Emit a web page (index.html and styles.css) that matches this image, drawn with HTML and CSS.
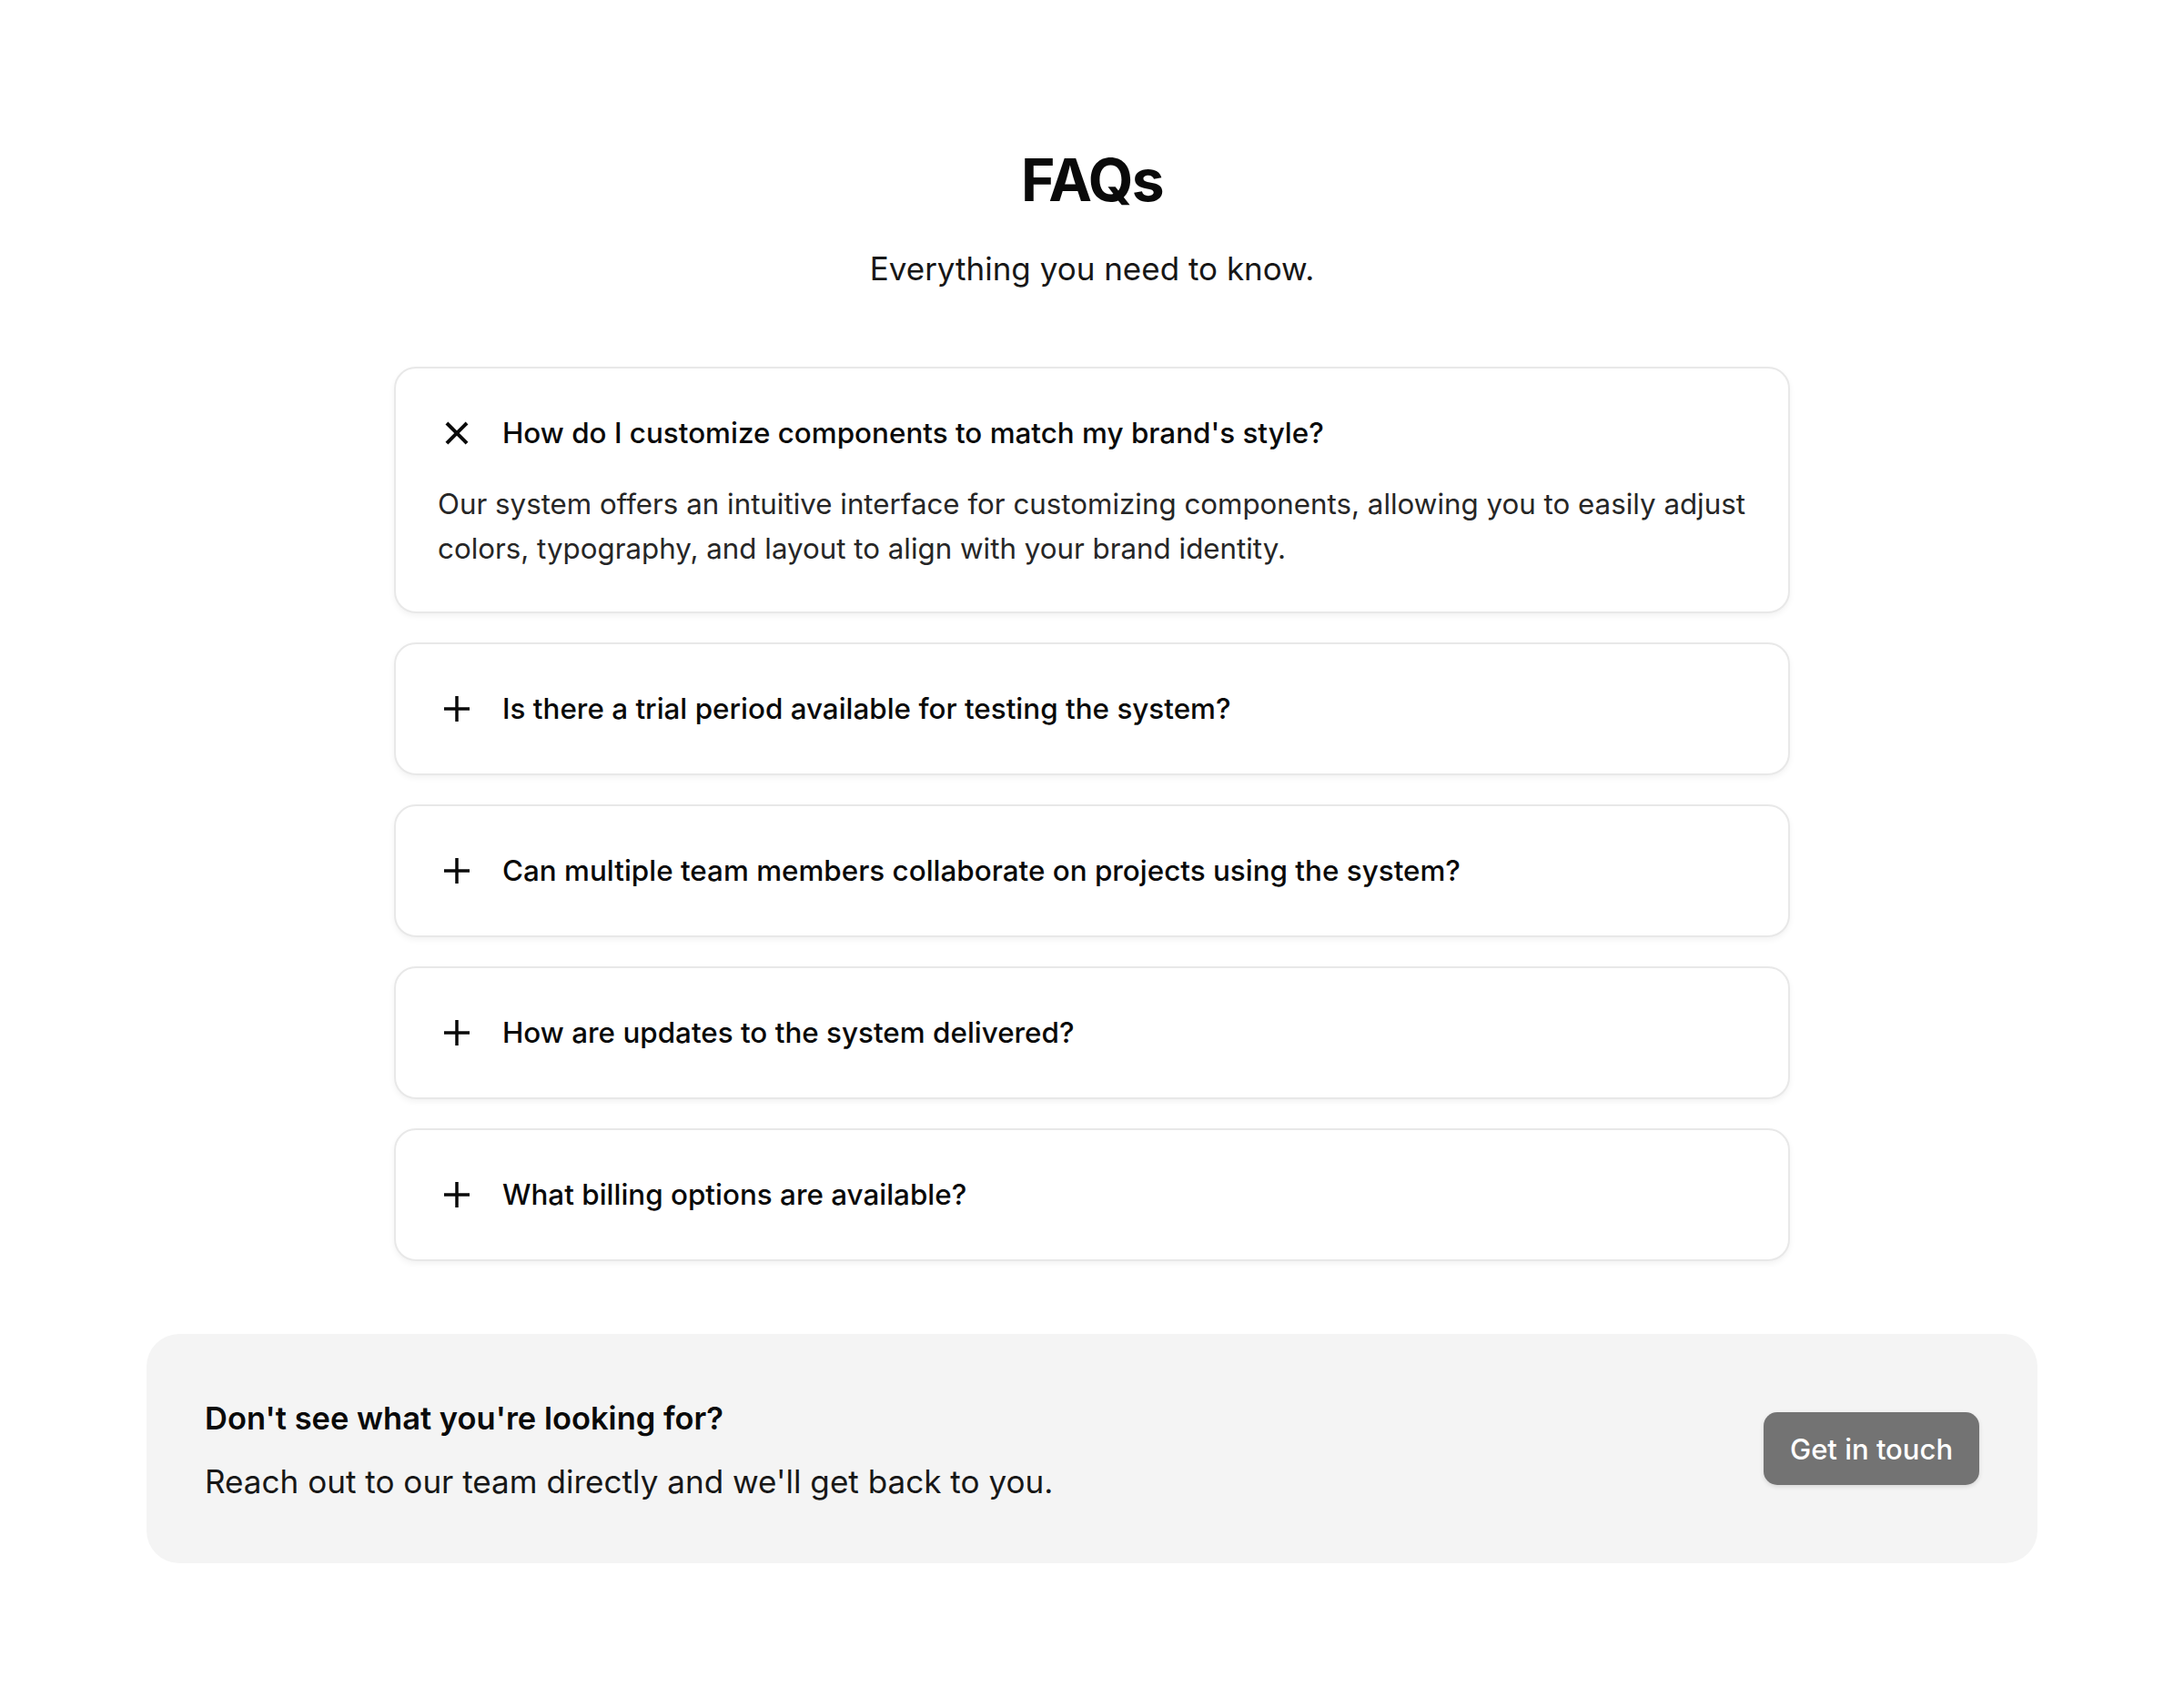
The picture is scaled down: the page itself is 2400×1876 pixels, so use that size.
FILE: index.html
```html
<!DOCTYPE html>
<html lang="en">
<head>
<meta charset="utf-8">
<title>FAQs</title>
<link rel="stylesheet" href="styles.css">
</head>
<body>
<main class="page">
  <header class="intro">
    <h1 class="title">FAQs</h1>
    <p class="subtitle">Everything you need to know.</p>
  </header>

  <section class="faq-list">
    <div class="faq open">
      <div class="faq-q">
        <svg class="icon icon-x" viewBox="0 0 24 24" fill="none" stroke="currentColor" stroke-width="2.3" stroke-linecap="square"><path d="M17.5 6.5 6.5 17.5"/><path d="m6.5 6.5 11 11"/></svg>
        <span>How do I customize components to match my brand's style?</span>
      </div>
      <p class="faq-a">Our system offers an intuitive interface for customizing components, allowing you to easily adjust colors, typography, and layout to align with your brand identity.</p>
    </div>
    <div class="faq">
      <div class="faq-q">
        <svg class="icon" viewBox="0 0 24 24" fill="none" stroke="currentColor" stroke-width="2" stroke-linecap="square"><path d="M5 12h14"/><path d="M12 5v14"/></svg>
        <span>Is there a trial period available for testing the system?</span>
      </div>
    </div>
    <div class="faq">
      <div class="faq-q">
        <svg class="icon" viewBox="0 0 24 24" fill="none" stroke="currentColor" stroke-width="2" stroke-linecap="square"><path d="M5 12h14"/><path d="M12 5v14"/></svg>
        <span>Can multiple team members collaborate on projects using the system?</span>
      </div>
    </div>
    <div class="faq">
      <div class="faq-q">
        <svg class="icon" viewBox="0 0 24 24" fill="none" stroke="currentColor" stroke-width="2" stroke-linecap="square"><path d="M5 12h14"/><path d="M12 5v14"/></svg>
        <span>How are updates to the system delivered?</span>
      </div>
    </div>
    <div class="faq">
      <div class="faq-q">
        <svg class="icon" viewBox="0 0 24 24" fill="none" stroke="currentColor" stroke-width="2" stroke-linecap="square"><path d="M5 12h14"/><path d="M12 5v14"/></svg>
        <span>What billing options are available?</span>
      </div>
    </div>
  </section>

  <section class="contact">
    <div class="contact-text">
      <h2 class="contact-title">Don't see what you're looking for?</h2>
      <p class="contact-body">Reach out to our team directly and we'll get back to you.</p>
    </div>
    <button class="contact-btn" type="button">Get in touch</button>
  </section>
</main>
</body>
</html>
```

FILE: styles.css
```css
* { box-sizing: border-box; }

html, body {
  margin: 0;
  padding: 0;
  background: #ffffff;
}

body {
  font-family: "Inter", "Noto Sans", "Liberation Sans", sans-serif;
  color: #0a0a0a;
}

.page {
  display: flex;
  flex-direction: column;
  align-items: center;
  padding-top: 162px;
}

.intro {
  display: flex;
  flex-direction: column;
  align-items: center;
}

.title {
  margin: 0;
  font-size: 64px;
  line-height: 72px;
  font-weight: 700;
  letter-spacing: -0.025em;
  color: #0a0a0a;
}

.subtitle {
  margin: 36px 0 0;
  font-size: 35px;
  line-height: 50px;
  font-weight: 400;
  color: #171717;
}

.faq-list {
  margin-top: 83px;
  width: 1534px;
  display: flex;
  flex-direction: column;
  gap: 32px;
}

.faq {
  background: #ffffff;
  border: 2px solid #e8e8e8;
  border-radius: 24px;
  box-shadow: 0 3px 6px rgba(0, 0, 0, 0.05);
  padding: 47px 46px;
}

.faq.open {
  padding-bottom: 44px;
}

.faq-q {
  display: flex;
  align-items: center;
  gap: 29px;
  height: 48px;
  font-size: 31.4px;
  font-weight: 500;
  color: #0a0a0a;
}

.icon {
  width: 42px;
  height: 42px;
  flex: none;
  color: #0a0a0a;
}

.faq-a {
  margin: 30px 0 0;
  font-size: 31.3px;
  line-height: 49px;
  font-weight: 400;
  color: #262626;
}

.contact {
  margin-top: 80px;
  width: 2078px;
  background: #f4f4f4;
  border-radius: 36px;
  padding: 64px;
  display: flex;
  align-items: center;
  justify-content: space-between;
}

.contact-title {
  margin: 0;
  font-size: 34.5px;
  line-height: 58px;
  font-weight: 600;
  color: #0a0a0a;
}

.contact-body {
  margin: 14px 0 0;
  font-size: 35.1px;
  line-height: 52px;
  font-weight: 400;
  color: #171717;
}

.contact-btn {
  width: 237px;
  height: 80px;
  border: none;
  border-radius: 15px;
  background: #737373;
  color: #ffffff;
  font-family: inherit;
  font-size: 31px;
  font-weight: 500;
  box-shadow: 0 2px 5px rgba(0, 0, 0, 0.12);
}
```
